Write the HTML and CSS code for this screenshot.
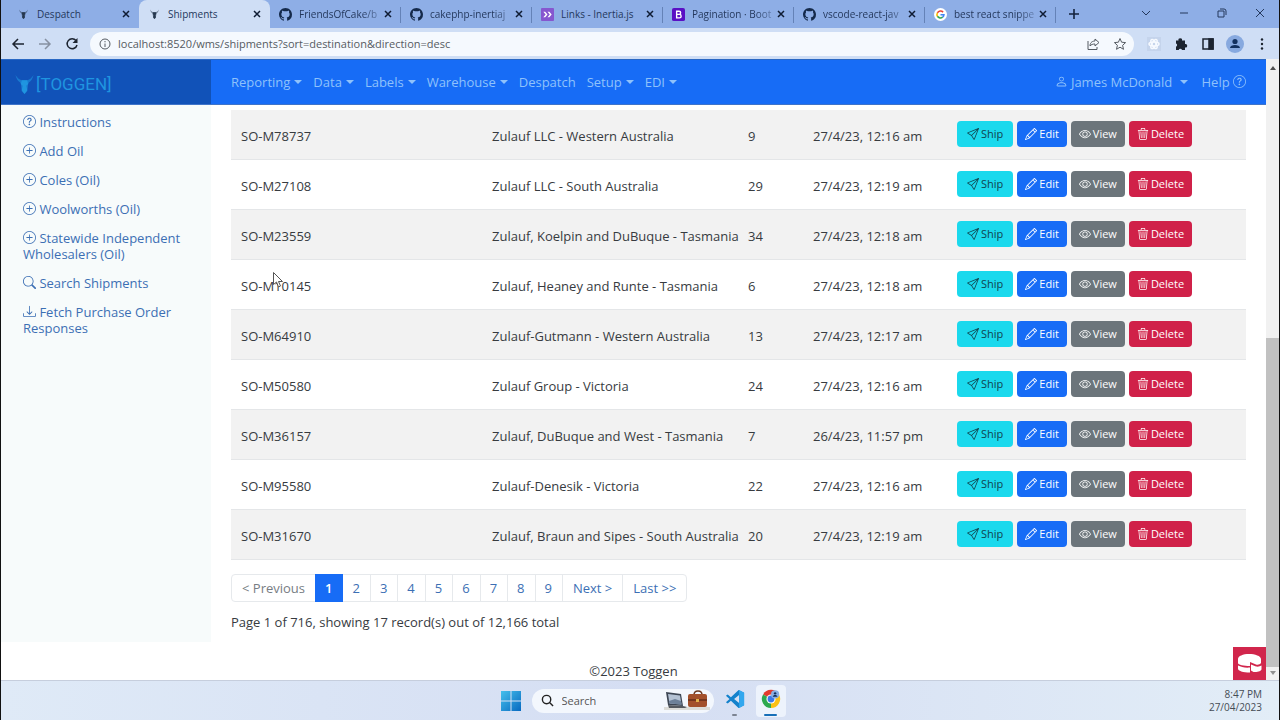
FILE: index.html
```html
<!DOCTYPE html>
<html lang="en">
<head>
<meta charset="utf-8">
<title>Shipments</title>
<link rel="stylesheet" href="styles.css">
</head>
<body>
<svg class="defs" aria-hidden="true">
  <symbol id="question" viewBox="0 0 16 16"><path d="M8 15A7 7 0 1 1 8 1a7 7 0 0 1 0 14m0 1A8 8 0 1 0 8 0a8 8 0 0 0 0 16"/><path d="M5.255 5.786a.237.237 0 0 0 .241.247h.825c.138 0 .248-.113.266-.25.09-.656.54-1.134 1.342-1.134.686 0 1.314.343 1.314 1.168 0 .635-.374.927-.965 1.371-.673.489-1.206 1.06-1.168 1.987l.003.217a.25.25 0 0 0 .25.246h.811a.25.25 0 0 0 .25-.25v-.105c0-.718.273-.927 1.01-1.486.609-.463 1.244-.977 1.244-2.056 0-1.511-1.276-2.241-2.673-2.241-1.267 0-2.655.59-2.75 2.286m1.557 5.763c0 .533.425.927 1.01.927.609 0 1.028-.394 1.028-.927 0-.552-.42-.94-1.029-.94-.584 0-1.009.388-1.009.94"/></symbol>
  <symbol id="plus" viewBox="0 0 16 16"><path d="M8 15A7 7 0 1 1 8 1a7 7 0 0 1 0 14m0 1A8 8 0 1 0 8 0a8 8 0 0 0 0 16"/><path d="M8 4a.5.5 0 0 1 .5.5v3h3a.5.5 0 0 1 0 1h-3v3a.5.5 0 0 1-1 0v-3h-3a.5.5 0 0 1 0-1h3v-3A.5.5 0 0 1 8 4"/></symbol>
  <symbol id="search" viewBox="0 0 16 16"><path d="M11.742 10.344a6.5 6.5 0 1 0-1.397 1.398h-.001q.044.06.098.115l3.85 3.85a1 1 0 0 0 1.415-1.414l-3.85-3.85a1 1 0 0 0-.115-.1zM12 6.5a5.5 5.5 0 1 1-11 0 5.5 5.5 0 0 1 11 0"/></symbol>
  <symbol id="download" viewBox="0 0 16 16"><path d="M.5 9.9a.5.5 0 0 1 .5.5v2.5a1 1 0 0 0 1 1h12a1 1 0 0 0 1-1v-2.5a.5.5 0 0 1 1 0v2.5a2 2 0 0 1-2 2H2a2 2 0 0 1-2-2v-2.5a.5.5 0 0 1 .5-.5"/><path d="M7.646 11.854a.5.5 0 0 0 .708 0l3-3a.5.5 0 0 0-.708-.708L8.500 10.293V1.500a.5.5 0 0 0-1 0v8.793L5.354 8.146a.5.5 0 1 0-.708.708z"/></symbol>
  <symbol id="send" viewBox="0 0 16 16"><path d="M15.854.146a.5.5 0 0 1 .11.54l-5.819 14.547a.75.75 0 0 1-1.329.124l-3.178-4.995L.643 7.184a.75.75 0 0 1 .124-1.33L15.314.037a.5.5 0 0 1 .54.11ZM6.636 10.07l2.761 4.338L14.13 2.576zm6.787-8.201L1.591 6.602l4.339 2.76z"/></symbol>
  <symbol id="pencil" viewBox="0 0 16 16"><path d="M12.146.146a.5.5 0 0 1 .708 0l3 3a.5.5 0 0 1 0 .708l-10 10a.5.5 0 0 1-.168.11l-5 2a.5.5 0 0 1-.65-.65l2-5a.5.5 0 0 1 .11-.168zM11.207 2.500 13.500 4.793 14.793 3.500 12.500 1.207zm1.586 3L10.500 3.207 4 9.707V10h.5a.5.5 0 0 1 .5.5v.5h.5a.5.5 0 0 1 .5.5v.5h.293zm-9.761 5.175-.106.106-1.528 3.821 3.821-1.528.106-.106A.5.5 0 0 1 5 12.500V12h-.5a.5.5 0 0 1-.5-.5V11h-.5a.5.5 0 0 1-.468-.325"/></symbol>
  <symbol id="eye" viewBox="0 0 16 16"><path d="M16 8s-3-5.500-8-5.500S0 8 0 8s3 5.500 8 5.500S16 8 16 8M1.173 8a13 13 0 0 1 1.660-2.043C4.120 4.668 5.880 3.500 8 3.500s3.879 1.168 5.168 2.457A13 13 0 0 1 14.828 8q-.086.130-.195.288c-.335.480-.830 1.120-1.465 1.755C11.879 11.332 10.119 12.500 8 12.500s-3.879-1.168-5.168-2.457A13 13 0 0 1 1.172 8z"/><path d="M8 5.500a2.500 2.500 0 1 0 0 5 2.500 2.500 0 0 0 0-5M4.500 8a3.500 3.500 0 1 1 7 0 3.500 3.500 0 0 1-7 0"/></symbol>
  <symbol id="trash" viewBox="0 0 16 16"><path d="M6.500 1h3a.5.5 0 0 1 .5.5v1H6v-1a.5.5 0 0 1 .5-.5M11 2.500v-1A1.500 1.500 0 0 0 9.500 0h-3A1.500 1.500 0 0 0 5 1.500v1H1.500a.5.5 0 0 0 0 1h.538l.853 10.660A2 2 0 0 0 4.885 16h6.230a2 2 0 0 0 1.994-1.840l.853-10.660h.538a.5.5 0 0 0 0-1zm1.958 1-.846 10.580a1 1 0 0 1-.997.920h-6.230a1 1 0 0 1-.997-.920L3.042 3.500z"/><path d="M4.700 4.600h1l.5 8.800h-1zM7.500 4.600h1v8.800h-1zM10.300 4.600h1l-.5 8.800h-1z"/></symbol>
  <symbol id="person" viewBox="0 0 16 16"><path d="M8 8a3 3 0 1 0 0-6 3 3 0 0 0 0 6m2-3a2 2 0 1 1-4 0 2 2 0 0 1 4 0m4 8c0 1-1 1-1 1H3s-1 0-1-1 1-4 6-4 6 3 6 4m-1-.004c-.001-.246-.154-.986-.832-1.664C11.516 10.680 10.289 10 8 10s-3.516.680-4.168 1.332c-.678.678-.830 1.418-.832 1.664z"/></symbol>
  <symbol id="github" viewBox="0 0 16 16"><path d="M8 0C3.580 0 0 3.580 0 8c0 3.540 2.290 6.530 5.470 7.590.4.070.550-.170.550-.380 0-.190-.010-.820-.010-1.490-2.010.370-2.530-.490-2.690-.940-.090-.230-.480-.940-.820-1.130-.280-.150-.680-.520-.010-.530.630-.010 1.080.580 1.230.820.720 1.210 1.870.870 2.330.660.070-.520.280-.870.510-1.070-1.780-.2-3.640-.890-3.640-3.950 0-.870.310-1.590.820-2.150-.080-.2-.360-1.020.080-2.120 0 0 .670-.210 2.200.820.640-.180 1.320-.270 2-.270s1.360.090 2 .270c1.530-1.040 2.200-.820 2.200-.820.440 1.100.160 1.920.080 2.120.510.560.820 1.270.820 2.150 0 3.070-1.870 3.750-3.650 3.950.290.250.540.730.540 1.480 0 1.070-.010 1.930-.010 2.200 0 .210.150.460.550.380A8 8 0 0 0 16 8c0-4.420-3.580-8-8-8"/></symbol>
  <symbol id="cross" viewBox="0 0 10 10"><path d="M2 2l6 6M8 2L2 8" stroke="currentColor" stroke-width="1.500"/></symbol>
  <symbol id="bull" viewBox="0 0 20 22"><path d="M0 1c2 3 4 5 7 6h6c3-1 5-3 7-6-1 4-3 7-5 8l-1 2-1 8-3 3-3-3-1-8-1-2C3 8 1 5 0 1" fill="currentColor" opacity=".6"/><path d="M7 7h6l1 4-2 2 1 5-3 4-3-4 1-5-2-2z" fill="currentColor"/></symbol>
</svg>

<div class="desktop">
  <div class="tabs">
    <div class="tab"><svg class="fav bull"><use href="#bull"/></svg><span>Despatch</span><button aria-label="Close tab"><svg><use href="#cross"/></svg></button></div>
    <div class="tab active"><svg class="fav bull"><use href="#bull"/></svg><span>Shipments</span><button aria-label="Close tab"><svg><use href="#cross"/></svg></button></div>
    <div class="tab ruled long"><svg class="fav"><use href="#github"/></svg><span>FriendsOfCake/b</span><button aria-label="Close tab"><svg><use href="#cross"/></svg></button></div>
    <div class="tab ruled long"><svg class="fav"><use href="#github"/></svg><span>cakephp-inertiaj</span><button aria-label="Close tab"><svg><use href="#cross"/></svg></button></div>
    <div class="tab ruled"><svg class="fav" viewBox="0 0 14 14"><rect width="14" height="14" rx="1" fill="#8657cf"/><path d="M2.500 4h2l2.500 3-2.500 3h-2L5 7zM7 4h2l2.500 3L9 10H7l2.500-3z" fill="#fff"/></svg><span>Links - Inertia.js</span><button aria-label="Close tab"><svg><use href="#cross"/></svg></button></div>
    <div class="tab ruled long"><svg class="fav" viewBox="0 0 14 14"><rect width="14" height="14" rx="2" fill="#5a10c4"/><path d="M5 3.500h2.600a1.700 1.700 0 0 1 0 3.400H5zm0 3.400h3a1.800 1.800 0 0 1 0 3.700H5z" fill="none" stroke="#fff" stroke-width="1.500"/></svg><span>Pagination · Boot</span><button aria-label="Close tab"><svg><use href="#cross"/></svg></button></div>
    <div class="tab ruled long"><svg class="fav"><use href="#github"/></svg><span>vscode-react-jav</span><button aria-label="Close tab"><svg><use href="#cross"/></svg></button></div>
    <div class="tab ruled long"><svg class="fav" viewBox="0 0 14 14"><circle cx="7" cy="7" r="7" fill="#fff"/><g fill="none" stroke-width="1.700"><path d="M9.800 4.400A3.800 3.800 0 0 0 3.700 5.200" stroke="#ea4335"/><path d="M3.700 5.200a3.800 3.800 0 0 0 0 3.700" stroke="#fbbc05"/><path d="M3.700 8.900a3.800 3.800 0 0 0 5.600 1" stroke="#34a853"/><path d="M9.300 9.900A3.800 3.800 0 0 0 10.700 7.300H7" stroke="#4285f4"/></g></svg><span>best react snippe</span><button aria-label="Close tab"><svg><use href="#cross"/></svg></button></div>
    <button class="newtab" aria-label="New tab"><svg viewBox="0 0 12 12"><path d="M6 1v10M1 6h10" stroke="currentColor" stroke-width="1.600"/></svg></button>
    <div class="window">
      <button aria-label="Search tabs"><svg viewBox="0 0 10 10"><path d="M1 3l4 4 4-4"/></svg></button>
      <button aria-label="Minimize"><svg viewBox="0 0 10 10"><path d="M1 5h8"/></svg></button>
      <button aria-label="Restore"><svg viewBox="0 0 10 10"><path d="M1 3h6v6H1zM3 1h4q2 0 2 2v4"/></svg></button>
      <button aria-label="Close"><svg viewBox="0 0 10 10"><path d="M1 1l8 8M9 1L1 9"/></svg></button>
    </div>
  </div>

  <div class="toolbar">
    <button aria-label="Back"><svg viewBox="0 0 14 14"><path d="M13 7H2M7 2L2 7l5 5"/></svg></button>
    <button class="faded" aria-label="Forward"><svg viewBox="0 0 14 14"><path d="M1 7h11M7 2l5 5-5 5"/></svg></button>
    <button aria-label="Reload"><svg viewBox="0 0 14 14"><path d="M11 3.500A5 5 0 1 0 12 8"/><path d="M12.500 1v5h-5z" fill="currentColor" stroke="none"/></svg></button>
    <div class="address">
      <svg viewBox="0 0 14 14"><circle cx="7" cy="7" r="5"/><path d="M7 6.500V10M7 4v1.300"/></svg>
      <input aria-label="Address" value="localhost:8520/wms/shipments?sort=destination&amp;direction=desc">
      <button aria-label="Share"><svg viewBox="0 0 14 14"><path d="M2 4v8.500h9V10M4 9c0-4 3-5 5-5V2l4 3.500L9 9V7C7 7 5 7.500 4 9z"/></svg></button>
      <button aria-label="Bookmark"><svg viewBox="0 0 14 14"><path d="M7 1.500l1.600 3.700 4 .4-3 2.700.9 4L7 10.200l-3.500 2.100.9-4-3-2.700 4-.4z"/></svg></button>
    </div>
    <div class="extensions">
      <button class="react" aria-label="React tools"><svg viewBox="0 0 14 14"><ellipse cx="7" cy="7" rx="5" ry="2"/><ellipse cx="7" cy="7" rx="5" ry="2" transform="rotate(60 7 7)"/><ellipse cx="7" cy="7" rx="5" ry="2" transform="rotate(120 7 7)"/></svg></button>
      <button aria-label="Extensions"><svg viewBox="0 0 14 14"><path d="M2 3.500h2.500a1.800 1.800 0 1 1 3.500 0h3V7a1.800 1.800 0 1 1 0 3.500V13H8a1.700 1.700 0 0 0-3.300 0H2V9.700a1.700 1.700 0 0 0 0-3.200z" fill="currentColor" stroke="none"/></svg></button>
      <button aria-label="Side panel"><svg viewBox="0 0 14 14"><path d="M2 2h10v10H2z"/><path d="M8 2h4v10H8z" fill="currentColor"/></svg></button>
      <button class="profile" aria-label="Profile"><svg viewBox="0 0 18 18"><circle cx="9" cy="9" r="9" fill="#87a9df"/><circle cx="9" cy="6.500" r="2.600" fill="#13315f"/><path d="M4 13c0-4 10-4 10 0z" fill="#13315f"/></svg></button>
      <button aria-label="Menu"><svg viewBox="0 0 14 14"><g fill="currentColor" stroke="none"><circle cx="7" cy="2.500" r="1.200"/><circle cx="7" cy="7" r="1.200"/><circle cx="7" cy="11.500" r="1.200"/></g></svg></button>
    </div>
  </div>

  <div class="viewport">
    <div class="page">
      <header class="navbar">
        <a class="brand" href="#"><svg><use href="#bull"/></svg><span>[TOGGEN]</span></a>
        <nav class="menu">
          <button class="caret">Reporting</button>
          <button class="caret">Data</button>
          <button class="caret">Labels</button>
          <button class="caret">Warehouse</button>
          <a href="#">Despatch</a>
          <button class="caret">Setup</button>
          <button class="caret">EDI</button>
          <button class="caret user"><svg class="icon"><use href="#person"/></svg> James McDonald&nbsp;</button>
          <a href="#">Help <svg class="icon"><use href="#question"/></svg></a>
        </nav>
      </header>
      <div class="body">
        <nav class="sidebar">
          <a href="#"><svg class="icon"><use href="#question"/></svg> Instructions</a>
          <a href="#"><svg class="icon"><use href="#plus"/></svg> Add Oil</a>
          <a href="#"><svg class="icon"><use href="#plus"/></svg> Coles (Oil)</a>
          <a href="#"><svg class="icon"><use href="#plus"/></svg> Woolworths (Oil)</a>
          <a href="#"><svg class="icon"><use href="#plus"/></svg> Statewide Independent Wholesalers (Oil)</a>
          <a href="#"><svg class="icon"><use href="#search"/></svg> Search Shipments</a>
          <a href="#"><svg class="icon"><use href="#download"/></svg> Fetch Purchase Order Responses</a>
        </nav>
        <main>
          <table>
            <colgroup><col class="c-order"><col class="c-dest"><col class="c-count"><col class="c-date"><col></colgroup>
            <tbody>
            <tr><td>SO-M78737</td><td>Zulauf LLC - Western Australia</td><td>9</td><td>27/4/23, 12:16 am</td><td><div class="actions"><button class="ship"><svg><use href="#send"/></svg>Ship</button><button class="edit"><svg><use href="#pencil"/></svg>Edit</button><button class="view"><svg><use href="#eye"/></svg>View</button><button class="delete"><svg><use href="#trash"/></svg>Delete</button></div></td></tr>
            <tr><td>SO-M27108</td><td>Zulauf LLC - South Australia</td><td>29</td><td>27/4/23, 12:19 am</td><td><div class="actions"><button class="ship"><svg><use href="#send"/></svg>Ship</button><button class="edit"><svg><use href="#pencil"/></svg>Edit</button><button class="view"><svg><use href="#eye"/></svg>View</button><button class="delete"><svg><use href="#trash"/></svg>Delete</button></div></td></tr>
            <tr><td>SO-M23559</td><td>Zulauf, Koelpin and DuBuque - Tasmania</td><td>34</td><td>27/4/23, 12:18 am</td><td><div class="actions"><button class="ship"><svg><use href="#send"/></svg>Ship</button><button class="edit"><svg><use href="#pencil"/></svg>Edit</button><button class="view"><svg><use href="#eye"/></svg>View</button><button class="delete"><svg><use href="#trash"/></svg>Delete</button></div></td></tr>
            <tr><td>SO-M10145</td><td>Zulauf, Heaney and Runte - Tasmania</td><td>6</td><td>27/4/23, 12:18 am</td><td><div class="actions"><button class="ship"><svg><use href="#send"/></svg>Ship</button><button class="edit"><svg><use href="#pencil"/></svg>Edit</button><button class="view"><svg><use href="#eye"/></svg>View</button><button class="delete"><svg><use href="#trash"/></svg>Delete</button></div></td></tr>
            <tr><td>SO-M64910</td><td>Zulauf-Gutmann - Western Australia</td><td>13</td><td>27/4/23, 12:17 am</td><td><div class="actions"><button class="ship"><svg><use href="#send"/></svg>Ship</button><button class="edit"><svg><use href="#pencil"/></svg>Edit</button><button class="view"><svg><use href="#eye"/></svg>View</button><button class="delete"><svg><use href="#trash"/></svg>Delete</button></div></td></tr>
            <tr><td>SO-M50580</td><td>Zulauf Group - Victoria</td><td>24</td><td>27/4/23, 12:16 am</td><td><div class="actions"><button class="ship"><svg><use href="#send"/></svg>Ship</button><button class="edit"><svg><use href="#pencil"/></svg>Edit</button><button class="view"><svg><use href="#eye"/></svg>View</button><button class="delete"><svg><use href="#trash"/></svg>Delete</button></div></td></tr>
            <tr><td>SO-M36157</td><td>Zulauf, DuBuque and West - Tasmania</td><td>7</td><td>26/4/23, 11:57 pm</td><td><div class="actions"><button class="ship"><svg><use href="#send"/></svg>Ship</button><button class="edit"><svg><use href="#pencil"/></svg>Edit</button><button class="view"><svg><use href="#eye"/></svg>View</button><button class="delete"><svg><use href="#trash"/></svg>Delete</button></div></td></tr>
            <tr><td>SO-M95580</td><td>Zulauf-Denesik - Victoria</td><td>22</td><td>27/4/23, 12:16 am</td><td><div class="actions"><button class="ship"><svg><use href="#send"/></svg>Ship</button><button class="edit"><svg><use href="#pencil"/></svg>Edit</button><button class="view"><svg><use href="#eye"/></svg>View</button><button class="delete"><svg><use href="#trash"/></svg>Delete</button></div></td></tr>
            <tr><td>SO-M31670</td><td>Zulauf, Braun and Sipes - South Australia</td><td>20</td><td>27/4/23, 12:19 am</td><td><div class="actions"><button class="ship"><svg><use href="#send"/></svg>Ship</button><button class="edit"><svg><use href="#pencil"/></svg>Edit</button><button class="view"><svg><use href="#eye"/></svg>View</button><button class="delete"><svg><use href="#trash"/></svg>Delete</button></div></td></tr>
            </tbody>
          </table>
          <nav class="pagination" aria-label="Pages">
            <a class="disabled">&lt; Previous</a><a class="num current" href="#">1</a><a class="num" href="#">2</a><a class="num" href="#">3</a><a class="num" href="#">4</a><a class="num" href="#">5</a><a class="num" href="#">6</a><a class="num" href="#">7</a><a class="num" href="#">8</a><a class="num" href="#">9</a><a href="#">Next &gt;</a><a href="#">Last &gt;&gt;</a>
          </nav>
          <p>Page 1 of 716, showing 17 record(s) out of 12,166 total</p>
        </main>
      </div>
      <footer>©2023 Toggen</footer>
      <button class="debugkit" aria-label="Debug toolbar"><svg viewBox="0 0 33 33"><path d="M5 12c0-3 5-5 11-5s12 2 12 5v4c-1 1.500-3 2-5 1.500L17 15v4c-6 0-12-1-12-3z" fill="#fff"/><path d="M5 18.500c3 1.500 7 2.500 12 2v5C10 25.500 5 24 5 21.500zM18 17.500l5 2c2 .4 4 0 5.500-1V22c0 2-4 3.500-8 3l-2.500-1.500z" fill="#fff"/></svg></button>
    </div>
    <div class="scrollbar"><i class="up"></i><div class="thumb"></div><i class="down"></i></div>
  </div>

  <div class="taskbar">
    <div class="apps">
      <button aria-label="Start"><svg class="start" viewBox="0 0 20 20"><defs><linearGradient id="win" x2="1" y2="1"><stop stop-color="#45c0ec"/><stop offset="1" stop-color="#0869c0"/></linearGradient></defs><path d="M0 0h9.500v9.500H0zM10.500 0H20v9.500h-9.500zM0 10.500h9.500V20H0zM10.500 10.500H20V20h-9.500z" fill="url(#win)"/></svg></button>
      <div class="search">
        <svg class="glass" viewBox="0 0 14 14"><circle cx="6" cy="6" r="4.500" fill="none" stroke="#222" stroke-width="1.500"/><path d="M9.500 9.500L13 13" stroke="#222" stroke-width="1.500"/></svg>
        <input aria-label="Search" placeholder="Search">
        <svg class="art" viewBox="0 0 46 22"><path d="M0 17h46v3H0z" fill="#dcdcd8"/><path d="M2 2l15 2 2 12-15-1z" fill="#3d4654"/><path d="M4 4l12 1.500 1.500 9L5.500 13.500z" fill="#b4c2d4"/><path d="M5 11l6-2 6 2 .5 3.500L5.500 13.500z" fill="#6d8098"/><path d="M4 15l15 1 4 1-2 1H5z" fill="#55595f"/><path d="M30 5q0-4 4-4t4 4" fill="none" stroke="#6d3a22" stroke-width="1.500"/><rect x="24" y="4" width="19" height="13" rx="2" fill="#a3502b"/><path d="M24 9h19v2H24z" fill="#74351d"/><path d="M32 9h3v3h-3z" fill="#e2b04a"/></svg>
      </div>
      <button class="app" aria-label="Code editor"><svg viewBox="0 0 22 22"><path d="M15 1l6 3v14l-6 3-8.500-8L3 16l-2-1.500L5 11 1 7.500 3 6l3.500 3zM15.500 6.500L10 11l5.500 4.500z" fill="#1482cc"/><path d="M15.500 1l5.500 3v14l-5.500 3z" fill="#32a7ee"/></svg><i></i></button>
      <button class="app running" aria-label="Browser"><svg viewBox="0 0 22 22"><path d="M11 11L2.300 6A10 10 0 0 1 19.700 6z" fill="#e33b2e"/><path d="M11 11L19.700 6A10 10 0 0 1 11 21z" fill="#fbc116"/><path d="M11 11v10A10 10 0 0 1 2.300 6z" fill="#2da94f"/><circle cx="11" cy="11" r="5" fill="#fff"/><circle cx="11" cy="11" r="3.800" fill="#3c79e6"/><circle cx="15.500" cy="6" r="4.500" fill="#8aaee2"/><circle cx="15.500" cy="4.800" r="1.300" fill="#13315f"/><path d="M13 8.500c0-2.500 5-2.500 5 0z" fill="#13315f"/></svg><i></i></button>
    </div>
    <div class="clock">8:47 PM<br>27/04/2023</div>
  </div>
  <svg class="cursor" viewBox="0 0 10 16"><path d="M.5.500v12l3-2.500 2 5 2-1-2-4.500h4z" fill="#fff" stroke="#555"/></svg>
</div>
</body>
</html>
```
FILE: styles.css
```css
* { box-sizing: border-box; }
body { margin: 0; font: 13px/20px "Open Sans", "Noto Sans", sans-serif; color: #373b3f; }
button, input { font: inherit; color: inherit; border: 0; padding: 0; background: none; }
a { color: #3c6fb4; text-decoration: none; }
svg { display: block; fill: currentColor; flex: none; }
.defs { position: absolute; width: 0; height: 0; }
.desktop { height: 100vh; display: flex; flex-direction: column; background: #fff; border: solid #111; border-width: 0 1px; overflow: hidden; }

.tabs { flex: none; height: 28px; display: flex; padding-left: 7px; background: #8eaee6; color: #24385c; font-size: 10px; }
.tab { flex: 0 1 131px; min-width: 0; display: flex; align-items: center; gap: 7px; padding: 0 8px 0 9px; position: relative; }
.tab span { flex: 1; white-space: nowrap; }
.tab.long span { mask-image: linear-gradient(90deg, #000 75%, #0003); }
.tab button { margin-left: -7px; }
.tab button svg { width: 10px; height: 10px; color: #0f1c33; }
.fav { width: 13px; height: 13px; color: #152a4b; }
.fav.bull { color: #26384f; height: 10px; }
.active { background: #cfdef5; border-radius: 8px 8px 0 0; }
.ruled::after { content: ""; position: absolute; right: 0; top: 7px; width: 1px; height: 16px; background: #6482b7; }
.newtab { margin-left: 12px; }
.newtab svg { width: 12px; height: 12px; color: #13223c; }
.window { margin-left: auto; display: flex; align-items: center; gap: 28px; padding: 0 14px 2px 0; }
.window svg { width: 10px; height: 10px; fill: none; stroke: #24385c; }

.toolbar { flex: none; height: 31px; display: flex; align-items: center; padding: 0 10px; background: #cfdef5; color: #1c2430; }
.toolbar svg { width: 14px; height: 14px; fill: none; stroke: currentColor; stroke-width: 1.5; }
.toolbar > button { margin-right: 13px; }
.toolbar .faded { color: #8791a2; }
.address { flex: 1; height: 24px; display: flex; align-items: center; gap: 6px; padding: 0 7px 0 8px; margin-left: -2px; border-radius: 12px; background: #f5f9fe; color: #555b62; }
.address svg { stroke-width: 1; }
.address input { flex: 1; min-width: 0; font-size: 11px; outline: 0; }
.address button + button { margin-left: 7px; }
.extensions { display: flex; align-items: center; gap: 13px; margin-left: 13px; }
.extensions .react { color: #f7faff; background: #c5d4ec; }
.toolbar .profile svg { width: 18px; height: 18px; stroke: none; }
.extensions .profile { margin: 0 -2px; }

.viewport { flex: 1; min-height: 0; display: flex; }
.page { flex: 1; min-width: 0; position: relative; overflow: hidden; display: flex; flex-direction: column; }
.navbar { flex: none; display: flex; height: 46px; background: #176cf6; border-bottom: 1px solid #3f74c9; border-top: 1px solid #2a68c4; color: #8fc2fb; }
.brand { width: 210px; display: flex; align-items: center; gap: 1px; padding-left: 13px; padding-top: 3px; background: #1152b8; color: #1f95e0; font: 17px/24px "Roboto", sans-serif; }
.brand svg { width: 21px; height: 20px; }
.menu { flex: 1; display: flex; align-items: center; gap: 11px; padding: 0 20px; white-space: nowrap; }
.menu a { color: inherit; }
.caret::after { content: ""; display: inline-block; margin-left: 4px; vertical-align: 3px; border: 4px solid transparent; border-top-color: currentColor; border-bottom: 0; }
.user { margin-left: auto; margin-right: 3px; }
.icon { display: inline-block; width: 13px; height: 13px; vertical-align: -1px; }

.body { display: flex; flex: none; }
.sidebar { width: 210px; padding: 9px 22px; background: #f7fbfb; display: flex; flex-direction: column; gap: 13px; line-height: 16px; }
main { flex: 1; min-width: 0; padding: 5px 20px 10px; }
table { width: 100%; border-spacing: 0; table-layout: fixed; }
.c-order { width: 251px; }
.c-dest { width: 256px; }
.c-count { width: 65px; }
.c-date { width: 144px; }
tr { height: 50px; }
td { padding: 11px 10px 0; vertical-align: top; line-height: 30px; white-space: nowrap; border-bottom: 1px solid #e4e6e8; }
tr:nth-child(odd) { background: #f2f2f2; }
td:first-child { padding-right: 0; }
.actions { display: flex; gap: 4px; }
.actions button { height: 26px; padding: 0 8px; display: flex; align-items: center; gap: 2px; border-radius: 4px; color: #fff; font-size: 11px; line-height: 18px; }
.actions svg { width: 12px; height: 12px; }
.actions .ship { background: #1bd9ed; color: #12434d; padding: 0 10px; }
.actions .edit { background: #176cf6; }
.actions .view { background: #6c757b; }
.actions .delete { background: #d02149; }

.pagination { display: flex; margin-top: 14px; }
.pagination a { padding: 3px 10px; border: 1px solid #e6e9ec; margin-left: -1px; line-height: 20px; }
.pagination a:first-child { margin-left: 0; border-radius: 4px 0 0 4px; }
.pagination a:last-child { border-radius: 0 4px 4px 0; }
.pagination .num { padding-left: 9px; }
.pagination .disabled { color: #777d83; }
.pagination .current { background: #176cf6; border-color: #176cf6; color: #fff; font-weight: 600; z-index: 1; }
p { margin: 10px 0 0; }
footer { padding-top: 19px; text-align: center; flex: none; }
.debugkit { position: absolute; right: 0; bottom: 0; width: 33px; height: 33px; background: #d1264c; }

.scrollbar { width: 13px; flex: none; display: flex; flex-direction: column; align-items: center; background: #f1f1f1; padding: 7px 0 5px; }
.scrollbar i { border: 3px solid transparent; flex: none; }
.scrollbar .up { border-bottom: 4px solid #505050; border-top: 0; margin-bottom: auto; }
.scrollbar .down { border-top: 4px solid #909090; border-bottom: 0; }
.thumb { width: 100%; height: 54%; background: #c1c1c1; margin-bottom: 4px; }

.taskbar { flex: none; height: 40px; display: grid; grid-template-columns: 1fr auto 1fr; align-items: center; background: linear-gradient(90deg, #dfeaf7, #d5def3 50%, #e2edf7); border-top: 1px solid #c6cedd; }
.apps { grid-column: 2; display: flex; align-items: center; gap: 11px; padding-left: 6px; }
.start { width: 20px; height: 20px; }
.search { width: 182px; height: 24px; display: flex; align-items: center; padding: 0 4px 0 9px; gap: 8px; border-radius: 12px; background: #f3f7fd; }
.search input { flex: 1; min-width: 0; font-size: 11px; outline: 0; }
.search input::placeholder { color: #555; opacity: 1; }
.glass { width: 13px; height: 13px; }
.art { width: 46px; height: 22px; }
.app { height: 32px; padding: 4px 0 0; }
.app svg { width: 20px; height: 20px; }
.app i { display: block; width: 5px; height: 2px; margin: 5px auto 0; border-radius: 1px; background: #7c8492; }
.running { padding: 4px 5px 0; border-radius: 4px; background: #edf3fc; }
.running i { width: 13px; background: #176fb8; }
.clock { text-align: right; padding-right: 17px; font-size: 10px; line-height: 13px; color: #454c55; }
.cursor { position: absolute; left: 273px; top: 272px; width: 10px; height: 16px; }
```
